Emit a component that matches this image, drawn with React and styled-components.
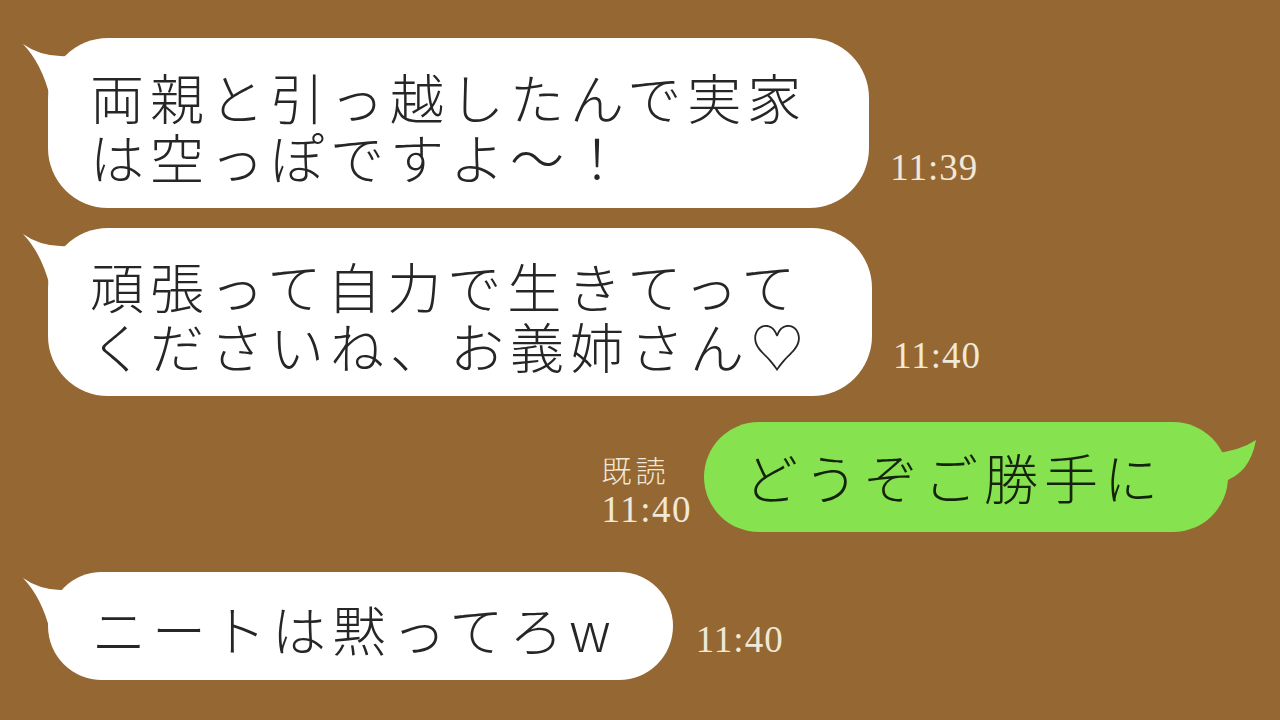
import React from "react";
import styled, { createGlobalStyle } from "styled-components";

const GlobalStyle = createGlobalStyle`
  html, body {
    margin: 0;
    padding: 0;
    background-color: #956733;
  }
  body {
    width: 1280px;
    height: 720px;
    overflow: hidden;
  }
`;

const Chat = styled.div`
  display: flex;
  flex-direction: column;
  padding-top: 38px;
  font-family: "Noto Sans CJK JP", "Noto Sans", sans-serif;
`;

const Row = styled.div`
  display: flex;
  align-items: flex-end;
  justify-content: ${(p) => (p.$mine ? "flex-end" : "flex-start")};
  padding: ${(p) => (p.$mine ? "0 52px 0 0" : "0 0 0 48px")};
  margin-top: ${(p) => p.$gap || 0}px;
`;

const Bubble = styled.div`
  position: relative;
  background-color: ${(p) => (p.$mine ? "#86e24e" : "#ffffff")};
  color: ${(p) => (p.$mine ? "#14240c" : "#262626")};
  border-radius: 60px;
  padding: ${(p) => p.$pad};
  font-size: 54px;
  font-weight: 300;
  line-height: 60px;
  letter-spacing: 6px;
  white-space: nowrap;
`;

const Tail = styled.svg`
  position: absolute;
  top: 0;
  width: 70px;
  height: 70px;
  ${(p) => (p.$mine ? "right: -30px;" : "left: -30px;")}
`;

const Time = styled.div`
  font-family: "Liberation Serif", serif;
  font-size: 37px;
  line-height: 37px;
  letter-spacing: 1px;
  color: #f1e8d8;
  margin: 0 0 ${(p) => p.$bottom || 22}px ${(p) => p.$left || 21}px;
`;

const ReadInfo = styled.div`
  display: flex;
  flex-direction: column;
  align-items: flex-start;
  margin: 0 12px 4px 0;
  color: #f1e8d8;
`;

const ReadLabel = styled.div`
  font-family: "Noto Sans CJK JP", sans-serif;
  font-size: 30px;
  font-weight: 300;
  line-height: 36px;
  letter-spacing: 4px;
  margin-bottom: 4px;
`;

const ReadTime = styled.div`
  font-family: "Liberation Serif", serif;
  font-size: 37px;
  line-height: 37px;
  letter-spacing: 1.5px;
`;

const LeftTail = () => (
  <Tail viewBox="0 0 70 70">
    <path d="M5 6 Q27 22 60 17 L60 64 L32 64 L32 59 Q24 26 5 6 Z" fill="#ffffff" />
  </Tail>
);

const RightTail = () => (
  <Tail $mine viewBox="0 0 70 70">
    <path d="M68 18 Q50 30 25 31 L25 65 L34 60 Q62 52 68 18 Z" fill="#86e24e" />
  </Tail>
);

export default function App() {
  return (
    <>
      <GlobalStyle />
      <Chat>
        <Row>
          <Bubble $pad="29px 62px 21px 42px">
            <LeftTail />
            両親と引っ越したんで実家
            <br />
            は空っぽですよ～！
          </Bubble>
          <Time>11:39</Time>
        </Row>
        <Row $gap={20}>
          <Bubble $pad="28px 62px 20px 42px">
            <LeftTail />
            頑張って自力で生きてって
            <br />
            くださいね、お義姉さん♡
          </Bubble>
          <Time>11:40</Time>
        </Row>
        <Row $mine $gap={26}>
          <ReadInfo>
            <ReadLabel>既読</ReadLabel>
            <ReadTime>11:40</ReadTime>
          </ReadInfo>
          <Bubble $mine $pad="25px 64px 25px 40px">
            <RightTail />
            どうぞご勝手に
          </Bubble>
        </Row>
        <Row $gap={40}>
          <Bubble $pad="27px 56px 21px 44px">
            <LeftTail />
            ニートは黙ってろw
          </Bubble>
          <Time $left={23}>11:40</Time>
        </Row>
      </Chat>
    </>
  );
}
